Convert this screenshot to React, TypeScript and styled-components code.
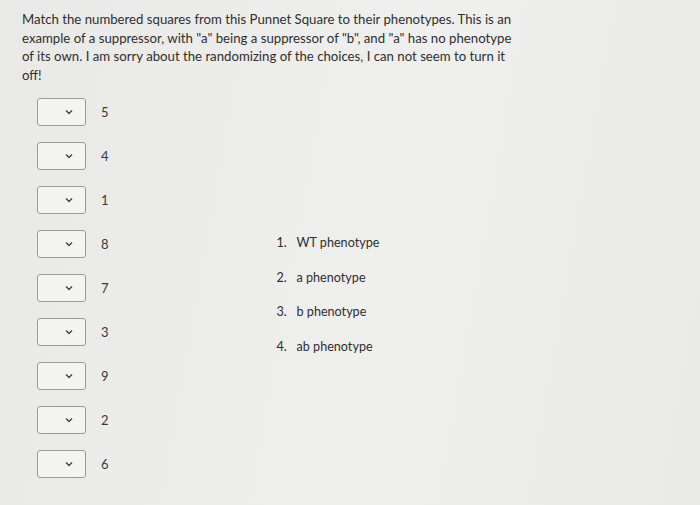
import React from "react";
import styled, { createGlobalStyle } from "styled-components";

const GlobalStyle = createGlobalStyle`
  html, body {
    margin: 0;
    padding: 0;
    background: #ebebea;
  }
  body {
    font-family: Lato, "Open Sans", sans-serif;
    color: #2f2f2f;
  }
`;

const Page = styled.div`
  width: 700px;
  height: 505px;
  overflow: hidden;
  background: linear-gradient(100deg, #e9e9e8 0%, #efefee 55%, #eaeae9 100%);
  padding: 10px 0 0 22px;
  box-sizing: border-box;
`;

const Question = styled.p`
  margin: 0;
  width: 500px;
  font-size: 13.2px;
  line-height: 18.6px;
`;

const Body = styled.div`
  display: flex;
  align-items: center;
  margin-top: 14px;
`;

const Matches = styled.div`
  display: flex;
  flex-direction: column;
  gap: 16px;
  padding-left: 15px;
`;

const MatchRow = styled.div`
  display: flex;
  align-items: center;
  gap: 15px;
`;

const SelectBox = styled.div`
  width: 49px;
  height: 28px;
  border: 1px solid #9a9a9a;
  border-radius: 3px;
  background: #f4f4f3;
  display: flex;
  align-items: center;
  justify-content: flex-end;
  padding-right: 12px;
  box-sizing: border-box;
`;

const Label = styled.span`
  font-size: 13px;
  color: #3a3a3a;
`;

const Choices = styled.ol`
  padding-left: 0;
  list-style: none;
  display: flex;
  flex-direction: column;
  gap: 16.5px;
  margin: 13.5px 0 0 168px;
`;

const Choice = styled.li`
  display: flex;
  font-size: 12.6px;
  line-height: 18px;
`;

const ChoiceNum = styled.span`
  width: 20px;
`;

function Chevron() {
  return (
    <svg width="8" height="6" viewBox="0 0 8 6">
      <path d="M1 1.5 L4 4.5 L7 1.5" fill="none" stroke="#444" strokeWidth="1.4" />
    </svg>
  );
}

const labels = ["5", "4", "1", "8", "7", "3", "9", "2", "6"];
const choices = ["WT phenotype", "a phenotype", "b phenotype", "ab phenotype"];

export default function App() {
  return (
    <Page>
      <GlobalStyle />
      <Question>
        Match the numbered squares from this Punnet Square to their phenotypes. This is an
        example of a suppressor, with "a" being a suppressor of "b", and "a" has no phenotype
        of its own. I am sorry about the randomizing of the choices, I can not seem to turn it
        off!
      </Question>
      <Body>
        <Matches>
          {labels.map((l, i) => (
            <MatchRow key={i}>
              <SelectBox>
                <Chevron />
              </SelectBox>
              <Label>{l}</Label>
            </MatchRow>
          ))}
        </Matches>
        <Choices>
          {choices.map((c, i) => (
            <Choice key={c}>
              <ChoiceNum>{i + 1}.</ChoiceNum>
              {c}
            </Choice>
          ))}
        </Choices>
      </Body>
    </Page>
  );
}
